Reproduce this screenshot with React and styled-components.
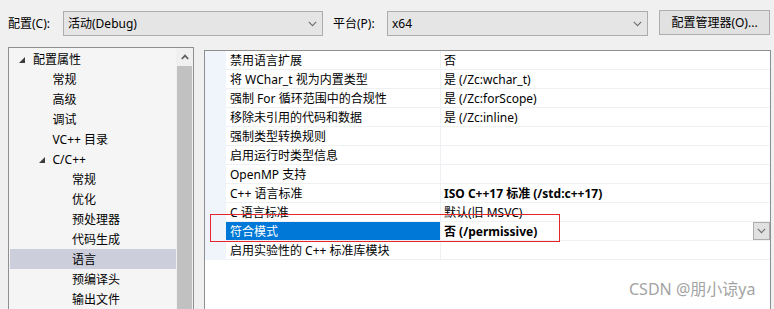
import React from 'react'
import styled, { createGlobalStyle } from 'styled-components'

const GlobalStyle = createGlobalStyle`
  html, body {
    margin: 0;
    padding: 0;
    background: #f0f0f0;
    font-family: "Noto Sans", "Noto Sans CJK SC", sans-serif;
    font-size: 12px;
    color: #000;
  }
`

const Page = styled.div`
  position: relative;
  width: 774px;
  height: 309px;
  overflow: hidden;
  display: flex;
  flex-direction: column;
`

const Toolbar = styled.div`
  display: flex;
  align-items: center;
  height: 47px;
  padding-left: 8px;
  flex-shrink: 0;
`

const Label = styled.span`
  width: ${p => p.w}px;
  margin-left: ${p => p.ml || 0}px;
  white-space: nowrap;
  line-height: 16px;
`

const Select = styled.div`
  box-sizing: border-box;
  width: ${p => p.w}px;
  height: 25px;
  display: flex;
  align-items: center;
  justify-content: space-between;
  padding: 0 5px 0 4px;
  background: #e5e5e5;
  border: 1px solid #adadad;
  line-height: 16px;
`

const Button = styled.div`
  box-sizing: border-box;
  width: 111px;
  height: 25px;
  margin-left: 11px;
  margin-bottom: 2px;
  display: flex;
  align-items: center;
  justify-content: center;
  background: #e1e1e1;
  border: 1px solid #adadad;
  line-height: 16px;
`

const Main = styled.div`
  display: flex;
  align-items: flex-start;
  gap: 10px;
  padding-left: 8px;
  flex: 1;
`

const TreePanel = styled.div`
  box-sizing: border-box;
  width: 186px;
  height: 280px;
  display: flex;
  background: #f5f5f5;
  border: 1px solid #8f8f8f;
`

const TreeList = styled.div`
  flex: 1;
  padding: 1px 0 0 1px;
`

const TreeRow = styled.div`
  box-sizing: border-box;
  height: 20px;
  display: flex;
  align-items: flex-start;
  padding-top: 2px;
  padding-left: ${p => 9 + p.level * 19.5}px;
  background: ${p => (p.selected ? '#cccedb' : 'transparent')};
  line-height: 18px;
  white-space: nowrap;
`

const Expander = styled.span`
  width: 14px;
  height: 18px;
  flex-shrink: 0;
  display: flex;
  align-items: center;
`

const ScrollBar = styled.div`
  width: 17px;
  display: flex;
  flex-direction: column;
  background: #f0f0f0;
`

const ScrollArrow = styled.div`
  height: 18px;
  display: flex;
  align-items: center;
  justify-content: center;
`

const Thumb = styled.div`
  flex: 1;
  margin: 0 1px;
  background: #c1c1c1;
`

const Grid = styled.div`
  box-sizing: border-box;
  width: 567px;
  height: 280px;
  margin-top: 3px;
  background: #fff;
  border: 1px solid #8f8f8f;
`

const Row = styled.div`
  display: grid;
  grid-template-columns: 21px 215px 1fr;
  height: 19px;
`

const Strip = styled.div`
  background: #f0f5fb;
`

const NameCell = styled.div`
  box-sizing: border-box;
  padding: 2px 0 0 4px;
  border-right: 1px solid #eef0f3;
  border-bottom: 1px solid #eef0f3;
  background: ${p => (p.selected ? '#0078d7' : 'transparent')};
  color: ${p => (p.selected ? '#fff' : '#000')};
  line-height: 16px;
  white-space: nowrap;
`

const ValueCell = styled.div`
  box-sizing: border-box;
  display: flex;
  align-items: flex-start;
  justify-content: space-between;
  padding-left: 3px;
  border-bottom: 1px solid #eef0f3;
  font-weight: ${p => (p.bold ? 700 : 400)};
  line-height: 16px;
  white-space: nowrap;
`

const ValueText = styled.span`
  padding-top: 2px;
`

const DropButton = styled.div`
  box-sizing: border-box;
  width: 17px;
  height: 18px;
  display: flex;
  align-items: center;
  justify-content: center;
  background: #e1e1e1;
  border: 1px solid #adadad;
`

const Highlight = styled.div`
  position: absolute;
  left: 210px;
  top: 214px;
  width: 350px;
  height: 28px;
  box-sizing: border-box;
  border: 1px solid #e5262c;
  pointer-events: none;
`

const Watermark = styled.div`
  position: absolute;
  left: 629px;
  top: 280px;
  font-size: 16px;
  line-height: 18px;
  color: #a3a3a3;
  white-space: nowrap;
`

const ChevronDown = () => (
  <svg width="9" height="6" viewBox="0 0 9 6">
    <polyline points="0.8,0.8 4.5,4.6 8.2,0.8" fill="none" stroke="#6d6d6d" strokeWidth="1.1" />
  </svg>
)

const ChevronUp = () => (
  <svg width="8" height="6" viewBox="0 0 8 6">
    <polyline points="0.8,5 4,1.6 7.2,5" fill="none" stroke="#606060" strokeWidth="1.8" />
  </svg>
)

const Triangle = () => (
  <svg width="6" height="6" viewBox="0 0 6 6">
    <polygon points="6,0 6,6 0,6" fill="#3c3c3c" />
  </svg>
)

const tree = [
  { label: '配置属性', level: 0, open: true },
  { label: '常规', level: 1 },
  { label: '高级', level: 1 },
  { label: '调试', level: 1 },
  { label: 'VC++ 目录', level: 1 },
  { label: 'C/C++', level: 1, open: true },
  { label: '常规', level: 2 },
  { label: '优化', level: 2 },
  { label: '预处理器', level: 2 },
  { label: '代码生成', level: 2 },
  { label: '语言', level: 2, selected: true },
  { label: '预编译头', level: 2 },
  { label: '输出文件', level: 2 },
]

const props = [
  { name: '禁用语言扩展', value: '否' },
  { name: '将 WChar_t 视为内置类型', value: '是 (/Zc:wchar_t)' },
  { name: '强制 For 循环范围中的合规性', value: '是 (/Zc:forScope)' },
  { name: '移除未引用的代码和数据', value: '是 (/Zc:inline)' },
  { name: '强制类型转换规则', value: '' },
  { name: '启用运行时类型信息', value: '' },
  { name: 'OpenMP 支持', value: '' },
  { name: 'C++ 语言标准', value: 'ISO C++17 标准 (/std:c++17)', bold: true },
  { name: 'C 语言标准', value: '默认(旧 MSVC)' },
  { name: '符合模式', value: '否 (/permissive)', bold: true, selected: true },
  { name: '启用实验性的 C++ 标准库模块', value: '' },
]

export default function App() {
  return (
    <Page>
      <GlobalStyle />
      <Toolbar>
        <Label w={55}>配置(C):</Label>
        <Select w={260}>
          <span>活动(Debug)</span>
          <ChevronDown />
        </Select>
        <Label w={54} ml={10}>平台(P):</Label>
        <Select w={261}>
          <span>x64</span>
          <ChevronDown />
        </Select>
        <Button>配置管理器(O)...</Button>
      </Toolbar>

      <Main>
        <TreePanel>
          <TreeList>
            {tree.map((item, i) => (
              <TreeRow key={i} level={item.level} selected={item.selected}>
                <Expander>{item.open && <Triangle />}</Expander>
                {item.label}
              </TreeRow>
            ))}
          </TreeList>
          <ScrollBar>
            <ScrollArrow>
              <ChevronUp />
            </ScrollArrow>
            <Thumb />
          </ScrollBar>
        </TreePanel>

        <Grid>
          {props.map((p, i) => (
            <Row key={i}>
              <Strip />
              <NameCell selected={p.selected}>{p.name}</NameCell>
              <ValueCell bold={p.bold}>
                <ValueText>{p.value}</ValueText>
                {p.selected && (
                  <DropButton>
                    <ChevronDown />
                  </DropButton>
                )}
              </ValueCell>
            </Row>
          ))}
        </Grid>
      </Main>

      <Highlight />
      <Watermark>CSDN @朋小谅ya</Watermark>
    </Page>
  )
}
